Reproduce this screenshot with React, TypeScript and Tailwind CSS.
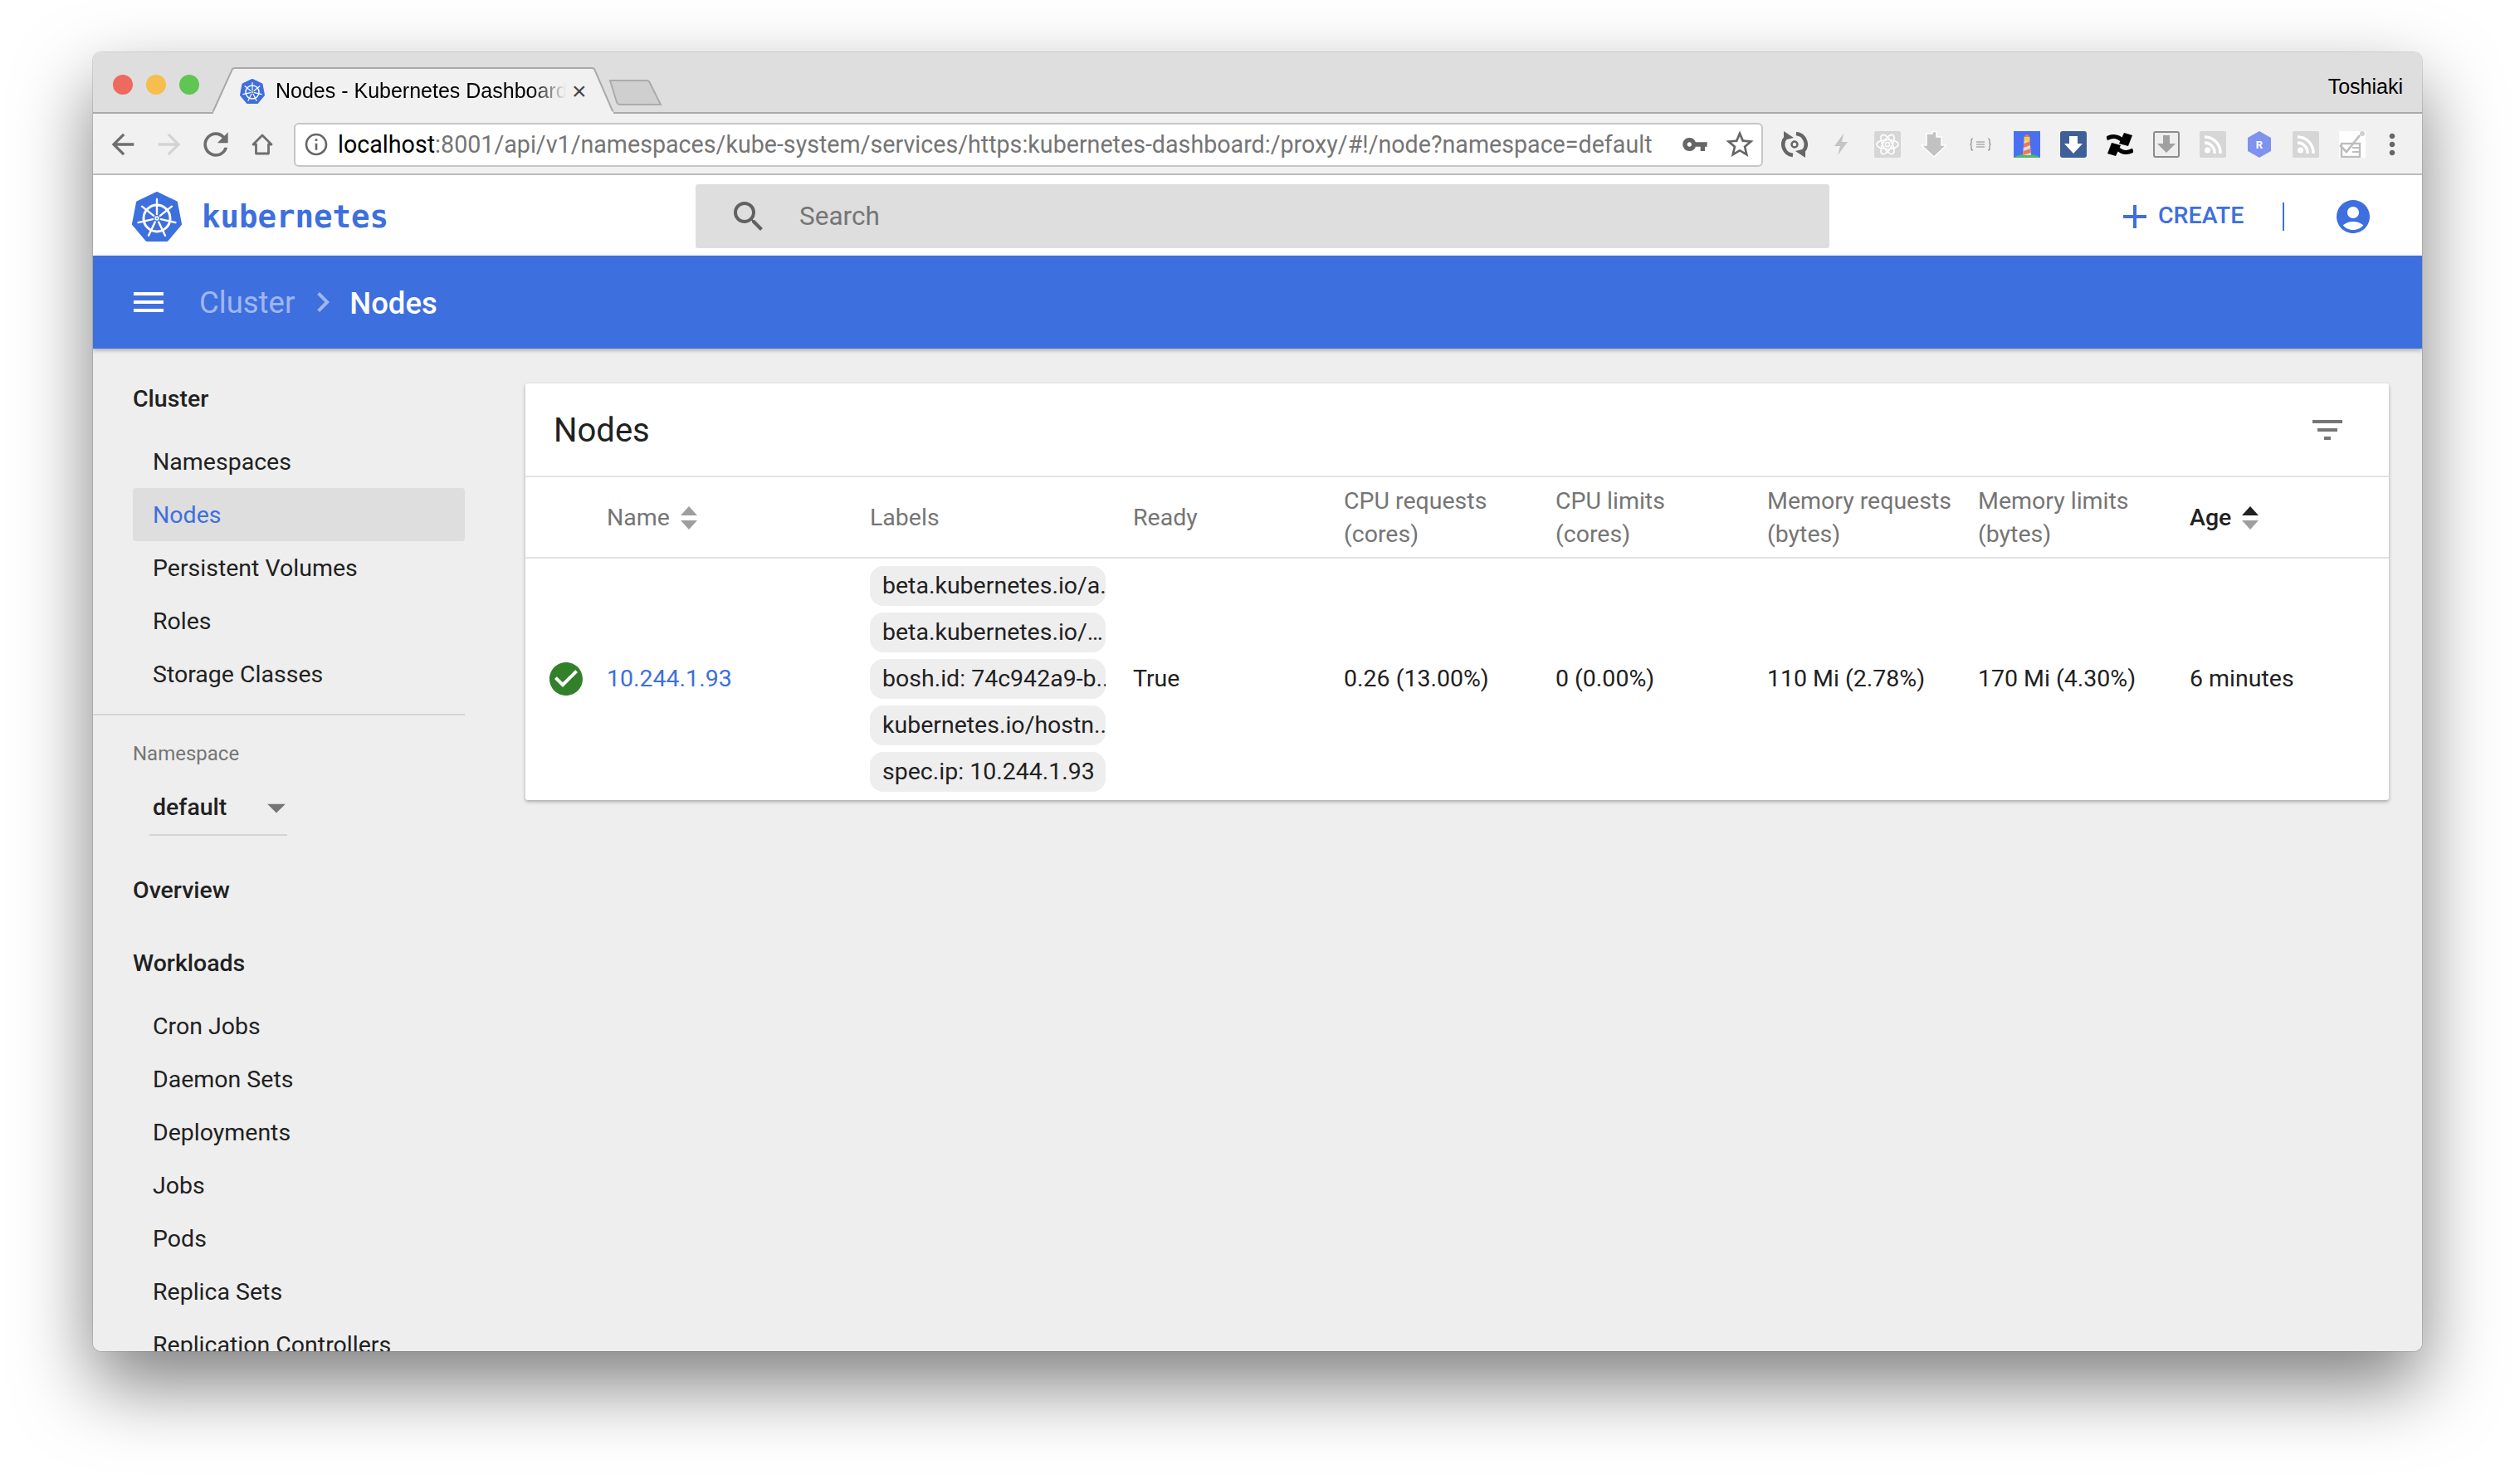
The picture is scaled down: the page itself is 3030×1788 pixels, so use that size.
import {
  MdAccountCircle,
  MdAdd,
  MdArrowBack,
  MdArrowDropDown,
  MdArrowForward,
  MdCheckCircle,
  MdChevronRight,
  MdFilterList,
  MdInfoOutline,
  MdMenu,
  MdMoreVert,
  MdRefresh,
  MdSearch,
  MdStarBorder,
  MdVpnKey,
} from "react-icons/md";

const URL_HOST = "localhost";
const URL_REST =
  ":8001/api/v1/namespaces/kube-system/services/https:kubernetes-dashboard:/proxy/#!/node?namespace=default";

const clusterItems = ["Namespaces", "Nodes", "Persistent Volumes", "Roles", "Storage Classes"];
const workloadItems = [
  "Cron Jobs",
  "Daemon Sets",
  "Deployments",
  "Jobs",
  "Pods",
  "Replica Sets",
  "Replication Controllers",
];
const labels = [
  "beta.kubernetes.io/a.",
  "beta.kubernetes.io/…",
  "bosh.id: 74c942a9-b..",
  "kubernetes.io/hostn..",
  "spec.ip: 10.244.1.93",
];

const spokes = [0, 1, 2, 3, 4, 5, 6].map((i) => (i * 360) / 7);

function KubeLogo({ className }: { className: string }) {
  return (
    <svg viewBox="0 0 60 60" className={className}>
      <path
        d="M30 2 L53 13 L58 39 L42 58 L18 58 L2 39 L7 13 Z"
        fill="#3e6fde"
        stroke="#3e6fde"
        strokeWidth="4"
        strokeLinejoin="round"
      />
      <g stroke="#fff" fill="none">
        <circle cx="30" cy="32" r="16" strokeWidth="3" />
        <circle cx="30" cy="32" r="1.8" strokeWidth="1.8" />
        {spokes.map((a) => (
          <line
            key={a}
            x1="30"
            y1="27"
            x2="30"
            y2="9"
            strokeWidth="2.4"
            strokeLinecap="round"
            transform={`rotate(${a} 30 32)`}
          />
        ))}
      </g>
    </svg>
  );
}

function SortArrows({ active }: { active?: boolean }) {
  return (
    <svg viewBox="0 0 20 28" className="ml-[13px] h-[28px] w-[20px]">
      <path d="M10 0 L20 11 L0 11 Z" fill={active ? "#212121" : "#9e9e9e"} />
      <path d="M10 28 L20 17 L0 17 Z" fill="#9e9e9e" />
    </svg>
  );
}

function HomeIcon() {
  return (
    <svg viewBox="0 0 26 26" className="h-[26px] w-[26px]" fill="none">
      <path d="M13 2 L24 13 L20.5 13 L20.5 24 L5.5 24 L5.5 13 L2 13 Z" stroke="#6e6e6e" strokeWidth="2.8" strokeLinejoin="round" />
    </svg>
  );
}

function SyncIcon() {
  return (
    <svg viewBox="0 0 32 32" className="h-[32px] w-[32px]" fill="none">
      <g>
        <path d="M14 29 A13 13 0 0 1 6 7" stroke="#666" strokeWidth="4.5" />
        <path d="M3 0 L15 8 L3 11 Z" fill="#666" />
      </g>
      <g transform="rotate(180 16 16)">
        <path d="M14 29 A13 13 0 0 1 6 7" stroke="#666" strokeWidth="4.5" />
        <path d="M3 0 L15 8 L3 11 Z" fill="#666" />
      </g>
      <circle cx="16" cy="16" r="3.5" stroke="#666" strokeWidth="2.5" />
    </svg>
  );
}

function BoltIcon() {
  return (
    <svg viewBox="0 0 16 26" className="h-[26px] w-[16px]">
      <path d="M11 0 L0 15 L7 15 L4 26 L16 10 L9 10 Z" fill="#c4c4c4" />
    </svg>
  );
}

function ReactIcon() {
  return (
    <svg viewBox="0 0 32 32" className="h-[32px] w-[32px]">
      <rect width="32" height="32" rx="2" fill="#d6d6d6" />
      <g fill="none" stroke="#fff" strokeWidth="1.6">
        <ellipse cx="16" cy="16" rx="13" ry="5.5" />
        <ellipse cx="16" cy="16" rx="13" ry="5.5" transform="rotate(60 16 16)" />
        <ellipse cx="16" cy="16" rx="13" ry="5.5" transform="rotate(120 16 16)" />
        <circle cx="16" cy="16" r="2.5" />
      </g>
    </svg>
  );
}

function GrayArrowIcon() {
  return (
    <svg viewBox="0 0 32 32" className="h-[32px] w-[32px]">
      <path
        d="M7 3 L14 3 L14 0.5 L19 0.5 L19 7 L25 7 L25 17 L31 17 L16 31 L1 17 L7 17 Z"
        fill="#c2c2c2"
        stroke="#fff"
        strokeWidth="1.5"
      />
    </svg>
  );
}

function BracesIcon() {
  return (
    <svg viewBox="0 0 26 16" className="h-[16px] w-[26px]" fill="none" stroke="#8a8a8a" strokeWidth="1.2">
      <path d="M4 1 Q2 1 2 3 L2 6 Q2 8 0.5 8 Q2 8 2 10 L2 13 Q2 15 4 15" />
      <path d="M22 1 Q24 1 24 3 L24 6 Q24 8 25.5 8 Q24 8 24 10 L24 13 Q24 15 22 15" />
      <path d="M8 5 H18 M8 8 H18 M8 11 H18" />
    </svg>
  );
}

function LighthouseIcon() {
  return (
    <svg viewBox="0 0 32 32" className="h-[32px] w-[32px]">
      <rect width="32" height="32" fill="#4a70f0" />
      <ellipse cx="16" cy="33" rx="16" ry="5" fill="#4fb868" />
      <path d="M12.5 12 H19.5 L21 29 H11 Z" fill="#d9d9ec" />
      <path d="M12.2 15 L19.8 12 L20.1 17 L11.8 20 Z M11.4 24 L20.5 21 L20.8 26 L11.1 29 Z" fill="#ee7a4c" />
      <rect x="12.5" y="7" width="7" height="5" fill="#f6cc4a" />
      <path d="M12.5 7 Q16 1 19.5 7 Z" fill="#ee7a4c" />
    </svg>
  );
}

function BlueDownloadIcon() {
  return (
    <svg viewBox="0 0 32 32" className="h-[32px] w-[32px]">
      <rect width="32" height="32" rx="3" fill="#3f5f99" />
      <path d="M11 6 H21 V15 H27 L16 27 L5 15 H11 Z" fill="#fff" />
    </svg>
  );
}

function BlackArrowsIcon() {
  return (
    <svg viewBox="0 0 32 28" className="h-[28px] w-[32px]" fill="none">
      <path d="M0 7 C7 3 14 4 20 10" stroke="#000" strokeWidth="5" />
      <path d="M21 0 L31 3 L26 16 L15 13 Z" fill="#000" />
      <g transform="rotate(180 16 14)">
        <path d="M0 7 C7 3 14 4 20 10" stroke="#000" strokeWidth="5" />
        <path d="M21 0 L31 3 L26 16 L15 13 Z" fill="#000" />
      </g>
    </svg>
  );
}

function BoxedDownloadIcon() {
  return (
    <svg viewBox="0 0 32 32" className="h-[32px] w-[32px]">
      <rect x="1" y="1" width="30" height="30" rx="2" fill="#eee" stroke="#8c8c8c" strokeWidth="2" />
      <path d="M12 5 H20 V15 H27 L16 26 L5 15 H12 Z" fill="#a0a0a0" />
    </svg>
  );
}

function RssIcon() {
  return (
    <svg viewBox="0 0 32 32" className="h-[32px] w-[32px]">
      <rect width="32" height="32" rx="2" fill="#d6d6d6" />
      <circle cx="9.5" cy="23" r="3.5" fill="#fff" />
      <g fill="none" stroke="#fff" strokeWidth="3.5">
        <path d="M6 14 A12 12 0 0 1 18 27" />
        <path d="M6 7 A19 19 0 0 1 25 27" />
      </g>
    </svg>
  );
}

function HexRIcon() {
  return (
    <svg viewBox="0 0 30 32" className="h-[32px] w-[30px]">
      <path d="M15 0 L29 8 L29 24 L15 32 L1 24 L1 8 Z" fill="#7f92ee" />
      <text x="15" y="21" textAnchor="middle" fontSize="13" fontWeight="700" fill="#fff" fontFamily="Roboto, sans-serif">
        R
      </text>
    </svg>
  );
}

function ChecklistIcon() {
  return (
    <svg viewBox="0 0 32 32" className="h-[32px] w-[32px]">
      <rect width="32" height="32" fill="#fff" />
      <rect x="3" y="15" width="22" height="16" fill="none" stroke="#bdbdbd" strokeWidth="2.4" />
      <path d="M1 17 L9 25 L25 5" fill="none" stroke="#bdbdbd" strokeWidth="2.6" />
      <circle cx="28" cy="3" r="3" fill="#cfcfcf" />
      <path d="M16 20 H24 M16 25 H24" stroke="#bdbdbd" strokeWidth="2" />
    </svg>
  );
}

const extensionIcons = [
  <SyncIcon key="sync" />,
  <BoltIcon key="bolt" />,
  <ReactIcon key="react" />,
  <GrayArrowIcon key="gray" />,
  <BracesIcon key="braces" />,
  <LighthouseIcon key="lighthouse" />,
  <BlueDownloadIcon key="blue" />,
  <BlackArrowsIcon key="black" />,
  <BoxedDownloadIcon key="boxed" />,
  <RssIcon key="rss1" />,
  <HexRIcon key="hex" />,
  <RssIcon key="rss2" />,
  <ChecklistIcon key="check" />,
];

function ChromeTabs() {
  return (
    <div className="flex h-[74px] items-end border-b-2 border-[#a9a9a9] bg-[#dedede] font-['Liberation_Sans',sans-serif]">
      <div className="flex h-full w-[144px] items-center gap-[16px] pl-[24px] pt-[6px]">
        <span className="h-[24px] w-[24px] rounded-full bg-[#ee6a5f]" />
        <span className="h-[24px] w-[24px] rounded-full bg-[#f6bd4f]" />
        <span className="h-[24px] w-[24px] rounded-full bg-[#61c554]" />
      </div>
      <div className="relative z-10 -mb-[2px] flex h-[56px] w-[484px] items-center pt-[2px]">
        <svg viewBox="0 0 484 56" className="absolute inset-0 h-full w-full">
          <path
            d="M0 55 L24 2 Q25 1 28 1 L456 1 Q459 1 460 2 L483 55 Z"
            fill="#f1f1f1"
            stroke="#a9a9a9"
            strokeWidth="2"
          />
          <path d="M1 55 L483 55" stroke="#f1f1f1" strokeWidth="3" />
        </svg>
        <KubeLogo className="relative ml-[33px] h-[30px] w-[30px]" />
        <span className="relative ml-[13px] w-[350px] overflow-hidden whitespace-nowrap text-[25px] text-black [mask-image:linear-gradient(to_right,black_88%,transparent_100%)]">
          Nodes - Kubernetes Dashboard
        </span>
        <span className="relative ml-[7px] text-[30px] leading-none text-[#444]">×</span>
      </div>
      <svg viewBox="0 0 66 34" className="ml-[-7px] mb-[6px] h-[34px] w-[66px]">
        <path d="M2 2 L46 2 Q49 2 50 5 L63 31 L14 31 Q11 31 10 28 Z" fill="#cfcfcf" stroke="#ababab" strokeWidth="2" />
      </svg>
      <span className="mb-[12px] ml-auto pr-[23px] text-[25px] text-black">Toshiaki</span>
    </div>
  );
}

function ChromeToolbar() {
  return (
    <div className="flex h-[74px] items-center border-b-2 border-[#bcbcbc] bg-[#f1f1f1] pl-[8px] pt-[2px]">
      <span className="flex w-[56px] justify-center">
        <MdArrowBack size={40} color="#6e6e6e" />
      </span>
      <span className="flex w-[56px] justify-center">
        <MdArrowForward size={40} color="#d4d4d4" />
      </span>
      <span className="flex w-[56px] justify-center">
        <MdRefresh size={44} color="#6e6e6e" />
      </span>
      <span className="flex w-[56px] justify-center">
        <HomeIcon />
      </span>
      <div className="ml-[10px] flex h-[53px] w-[1770px] items-center rounded-[6px] border-2 border-[#c6c6c6] bg-white pl-[9px] pr-[6px]">
        <MdInfoOutline size={32} color="#666" />
        <span className="ml-[10px] whitespace-nowrap font-['Roboto',sans-serif] text-[28.65px] text-black">
          {URL_HOST}
          <span className="text-[#757575]">{URL_REST}</span>
        </span>
        <MdVpnKey size={32} color="#666" className="ml-auto" />
        <MdStarBorder size={40} color="#666" className="ml-[18px]" />
      </div>
      <div className="ml-[10px] flex items-center">
        {extensionIcons.map((icon) => (
          <span key={icon.key} className="flex h-[32px] w-[56px] items-center justify-center">
            {icon}
          </span>
        ))}
        <span className="flex w-[40px] justify-center">
          <MdMoreVert size={40} color="#666" />
        </span>
      </div>
    </div>
  );
}

function AppHeader() {
  return (
    <div className="flex h-[97px] items-center bg-white pt-[2px]">
      <KubeLogo className="ml-[47px] h-[60px] w-[60px]" />
      <span className="ml-[24px] w-[595px] pt-[2px] font-['DejaVu_Sans_Mono',monospace] text-[37.4px] font-bold leading-none text-[#3e6fde]">
        kubernetes
      </span>
      <div className="flex h-[77px] w-[1366px] items-center rounded-[3px] bg-[#dedede] pl-[40px]">
        <MdSearch size={48} color="#616161" />
        <span className="ml-[37px] text-[31.5px] text-[#757575]">Search</span>
      </div>
      <div className="ml-[344px] flex items-center text-[#3e6fde]">
        <MdAdd size={48} />
        <span className="ml-[4px] text-[28.5px] font-medium">CREATE</span>
        <span className="ml-[47px] h-[34px] w-[2px] bg-[#3e6fde]" />
        <MdAccountCircle size={48} className="ml-[59px]" />
      </div>
    </div>
  );
}

function ActionBar() {
  return (
    <div className="relative z-10 flex h-[112px] items-center bg-[#3e6fde] pl-[43px] shadow-[0_2px_5px_rgba(0,0,0,0.3)]">
      <MdMenu size={48} color="#fff" />
      <span className="ml-[37px] pt-[3px] text-[36.5px] text-white/50">Cluster</span>
      <MdChevronRight size={48} className="ml-[10px] text-white/50" />
      <span className="ml-[8px] pt-[4px] text-[36.5px] font-medium text-white">Nodes</span>
    </div>
  );
}

function NavItem({ label, active }: { label: string; active?: boolean }) {
  return (
    <div
      className={`ml-[48px] flex h-[64px] items-center rounded-[4px] pl-[24px] pt-[2px] text-[28.5px] ${
        active ? "bg-[#dedede] text-[#3e6fde]" : "text-[#212121]"
      }`}
    >
      {label}
    </div>
  );
}

function Sidebar() {
  return (
    <div className="w-[448px] shrink-0 pt-[28px]">
      <div className="ml-[48px] flex h-[64px] items-center pt-[2px] text-[28.5px] font-medium text-[#212121]">Cluster</div>
      <div className="mt-[12px]">
        {clusterItems.map((item) => (
          <NavItem key={item} label={item} active={item === "Nodes"} />
        ))}
      </div>
      <div className="mt-[16px] border-t-2 border-[#d4d4d4] pt-[30px]">
        <div className="ml-[48px] flex h-[32px] items-center text-[24px] text-[#757575]">Namespace</div>
        <div className="ml-[68px] mt-[17px] flex h-[66px] w-[166px] items-center border-b-2 border-[#d4d4d4] pl-[4px] text-[28.5px] font-medium text-[#212121]">
          default
          <MdArrowDropDown size={52} color="#757575" className="ml-auto -mr-[13px]" />
        </div>
      </div>
      <div className="ml-[48px] mt-[33px] flex h-[64px] items-center pt-[2px] text-[28.5px] font-medium text-[#212121]">Overview</div>
      <div className="ml-[48px] mt-[24px] flex h-[64px] items-center pt-[2px] text-[28.5px] font-medium text-[#212121]">Workloads</div>
      <div className="mt-[12px]">
        {workloadItems.map((item) => (
          <NavItem key={item} label={item} />
        ))}
      </div>
    </div>
  );
}

function NodesCard() {
  return (
    <div className="rounded-[3px] bg-white shadow-[0_2px_4px_rgba(0,0,0,0.3)]">
      <div className="flex h-[113px] items-center justify-between border-b-2 border-[#e3e3e3] pl-[34px] pr-[50px]">
        <span className="pt-[2px] text-[40px] text-[#212121]">Nodes</span>
        <MdFilterList size={48} color="#757575" />
      </div>
      <div className="grid h-[98px] grid-cols-[98px_317px_317px_254px_255px_255px_254px_255px_1fr] items-center border-b-2 border-[#e3e3e3] pt-[2px] text-[28.5px] leading-[40px] text-[#757575]">
        <span />
        <span className="flex items-center">
          Name
          <SortArrows />
        </span>
        <span>Labels</span>
        <span>Ready</span>
        <span>
          CPU requests
          <br />
          (cores)
        </span>
        <span>
          CPU limits
          <br />
          (cores)
        </span>
        <span className="whitespace-nowrap">
          Memory requests
          <br />
          (bytes)
        </span>
        <span>
          Memory limits
          <br />
          (bytes)
        </span>
        <span className="flex items-center font-medium text-[#212121]">
          Age
          <SortArrows active />
        </span>
      </div>
      <div className="grid grid-cols-[98px_317px_317px_254px_255px_255px_254px_255px_1fr] items-center pb-[10px] pt-[9px] text-[28.5px] text-[#212121]">
        <span className="pl-[25px]">
          <MdCheckCircle size={48} color="#33802a" />
        </span>
        <span className="text-[#3e6fde]">10.244.1.93</span>
        <div className="flex flex-col gap-[8px]">
          {labels.map((label) => (
            <span
              key={label}
              className="flex h-[48px] w-[284px] items-center overflow-hidden whitespace-nowrap rounded-[16px] bg-[#eeeeee] pl-[15px]"
            >
              {label}
            </span>
          ))}
        </div>
        <span>True</span>
        <span>0.26 (13.00%)</span>
        <span>0 (0.00%)</span>
        <span>110 Mi (2.78%)</span>
        <span>170 Mi (4.30%)</span>
        <span>6 minutes</span>
      </div>
    </div>
  );
}

export default function App() {
  return (
    <div className="h-[1788px] w-[3030px] overflow-hidden bg-white pl-[112px] pt-[63px]">
      <div className="flex h-[1565px] w-[2806px] flex-col overflow-hidden rounded-[10px] shadow-[0_40px_90px_rgba(0,0,0,0.5),0_0_0_1px_rgba(0,0,0,0.12)]">
        <ChromeTabs />
        <ChromeToolbar />
        <div className="flex min-h-0 flex-1 flex-col bg-[#eeeeee] font-['Roboto',sans-serif]">
          <AppHeader />
          <ActionBar />
          <div className="flex min-h-0 flex-1 overflow-hidden">
            <Sidebar />
            <div className="flex-1 pl-[73px] pr-[40px] pt-[42px]">
              <NodesCard />
            </div>
          </div>
        </div>
      </div>
    </div>
  );
}
